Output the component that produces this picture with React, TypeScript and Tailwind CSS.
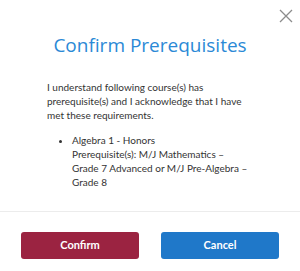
export default function App() {
  return (
    <div className="relative flex h-[271px] w-[300px] flex-col bg-white font-['Lato',sans-serif] text-[#333]">
      {/* close */}
      <button className="absolute right-[7px] top-[9px] h-[14px] w-[14px]">
        <svg viewBox="0 0 14 14" className="h-[14px] w-[14px]">
          <path d="M1 1L13 13M13 1L1 13" stroke="#8c8c8c" strokeWidth="1.3" fill="none" />
        </svg>
      </button>

      <h1 className="pt-[33px] text-center font-['Open_Sans',sans-serif] text-[19px] leading-[24px] text-[#2b89d6]">
        Confirm Prerequisites
      </h1>

      <div className="mt-[23px] px-[47px] text-[10px] leading-[14px]">
        <p>
          I understand following course(s) has
          <br />
          prerequisite(s) and I acknowledge that I have
          <br />
          met these requirements.
        </p>
        <ul className="mt-[11px] list-disc pl-[25px]">
          <li>
            Algebra 1 - Honors
            <br />
            Prerequisite(s): M/J Mathematics –
            <br />
            Grade 7 Advanced or M/J Pre-Algebra –
            <br />
            Grade 8
          </li>
        </ul>
      </div>

      <div className="mt-auto flex h-[60px] gap-[22px] border-t border-[#ececec] px-[21px] pt-[20px]">
        <button className="h-[27px] flex-1 rounded-[3px] bg-[#9b2341] text-[11px] font-bold text-white">Confirm</button>
        <button className="h-[27px] flex-1 rounded-[3px] bg-[#1f78c9] text-[11px] font-bold text-white">Cancel</button>
      </div>
    </div>
  );
}
